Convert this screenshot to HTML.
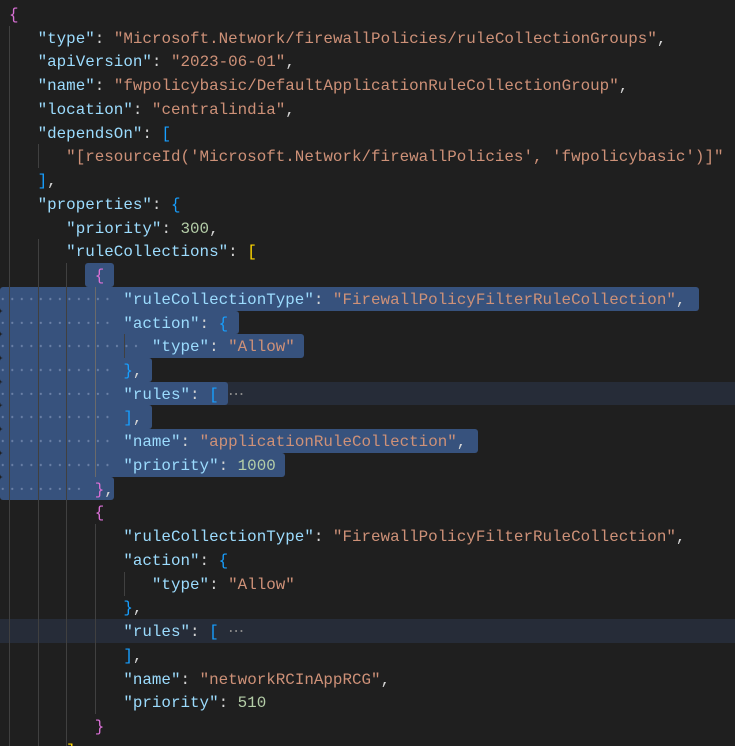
<!DOCTYPE html>
<html><head><meta charset="utf-8"><style>
html,body{margin:0;padding:0;background:#1f1f1f;width:735px;height:746px;overflow:hidden}
#ed{position:relative;width:735px;height:746px;font-family:"Liberation Mono",monospace;font-size:15.88px}
.r{position:absolute;height:23.73px}
.sel{background:#37527d;border-radius:3px}
.fold{background:#262c38;left:0;width:735px}
.d{position:absolute;height:23.73px;left:0;background:radial-gradient(circle,#6c82a8 0.9px,transparent 1.3px);background-size:9.53px 23.73px;background-position:-2px 0}
.g{position:absolute;width:1px;background:#404040}
.ga{background:#6a6a6a}
pre{position:absolute;left:9px;top:4px;margin:0;font:inherit;line-height:23.73px;color:#d4d4d4;white-space:pre}
.k{color:#9cdcfe}.s{color:#ce9178}.n{color:#b5cea8}
.p{color:#da70d6}.b{color:#179fff}.y{color:#ffd700}
.e{color:#8a8a8a}
</style></head><body><div id="ed">
<div class="r fold" style="top:381.7px"></div>
<div class="r fold" style="top:619px"></div>
<div class="r sel" style="top:263px;left:85px;width:29px"></div>
<div class="r sel" style="top:286.8px;left:0;width:699px"></div>
<div class="r sel" style="top:310.5px;left:0;width:239px"></div>
<div class="r sel" style="top:334.2px;left:0;width:304px"></div>
<div class="r sel" style="top:358px;left:0;width:152px"></div>
<div class="r sel" style="top:381.7px;left:0;width:228px"></div>
<div class="r sel" style="top:405.4px;left:0;width:152px"></div>
<div class="r sel" style="top:429.1px;left:0;width:478px"></div>
<div class="r sel" style="top:452.9px;left:0;width:285px"></div>
<div class="r sel" style="top:476.6px;left:0;width:114px"></div>
<div class="d" style="top:286.8px;width:114px"></div>
<div class="d" style="top:310.5px;width:114px"></div>
<div class="d" style="top:334.2px;width:143px"></div>
<div class="d" style="top:358px;width:114px"></div>
<div class="d" style="top:381.7px;width:114px"></div>
<div class="d" style="top:405.4px;width:114px"></div>
<div class="d" style="top:429.1px;width:114px"></div>
<div class="d" style="top:452.9px;width:114px"></div>
<div class="d" style="top:476.6px;width:85px"></div>
<div class="g" style="left:9px;top:26px;height:720px"></div>
<div class="g" style="left:38px;top:144px;height:24px"></div>
<div class="g" style="left:38px;top:239px;height:507px"></div>
<div class="g" style="left:66px;top:263px;height:483px"></div>
<div class="g ga" style="left:95px;top:287px;height:190px"></div>
<div class="g" style="left:95px;top:524px;height:190px"></div>
<div class="g" style="left:124px;top:334px;height:24px"></div>
<div class="g" style="left:124px;top:572px;height:24px"></div>
<pre><span class="p">{</span>
   <span class="k">"type"</span>: <span class="s">"Microsoft.Network/firewallPolicies/ruleCollectionGroups"</span>,
   <span class="k">"apiVersion"</span>: <span class="s">"2023-06-01"</span>,
   <span class="k">"name"</span>: <span class="s">"fwpolicybasic/DefaultApplicationRuleCollectionGroup"</span>,
   <span class="k">"location"</span>: <span class="s">"centralindia"</span>,
   <span class="k">"dependsOn"</span>: <span class="b">[</span>
      <span class="s">"[resourceId('Microsoft.Network/firewallPolicies', 'fwpolicybasic')]"</span>
   <span class="b">]</span>,
   <span class="k">"properties"</span>: <span class="b">{</span>
      <span class="k">"priority"</span>: <span class="n">300</span>,
      <span class="k">"ruleCollections"</span>: <span class="y">[</span>
         <span class="p">{</span>
            <span class="k">"ruleCollectionType"</span>: <span class="s">"FirewallPolicyFilterRuleCollection"</span>,
            <span class="k">"action"</span>: <span class="b">{</span>
               <span class="k">"type"</span>: <span class="s">"Allow"</span>
            <span class="b">}</span>,
            <span class="k">"rules"</span>: <span class="b">[</span> <span class="e">⋯</span>
            <span class="b">]</span>,
            <span class="k">"name"</span>: <span class="s">"applicationRuleCollection"</span>,
            <span class="k">"priority"</span>: <span class="n">1000</span>
         <span class="p">}</span>,
         <span class="p">{</span>
            <span class="k">"ruleCollectionType"</span>: <span class="s">"FirewallPolicyFilterRuleCollection"</span>,
            <span class="k">"action"</span>: <span class="b">{</span>
               <span class="k">"type"</span>: <span class="s">"Allow"</span>
            <span class="b">}</span>,
            <span class="k">"rules"</span>: <span class="b">[</span> <span class="e">⋯</span>
            <span class="b">]</span>,
            <span class="k">"name"</span>: <span class="s">"networkRCInAppRCG"</span>,
            <span class="k">"priority"</span>: <span class="n">510</span>
         <span class="p">}</span>
      <span class="y">]</span>
</pre>
</div></body></html>
